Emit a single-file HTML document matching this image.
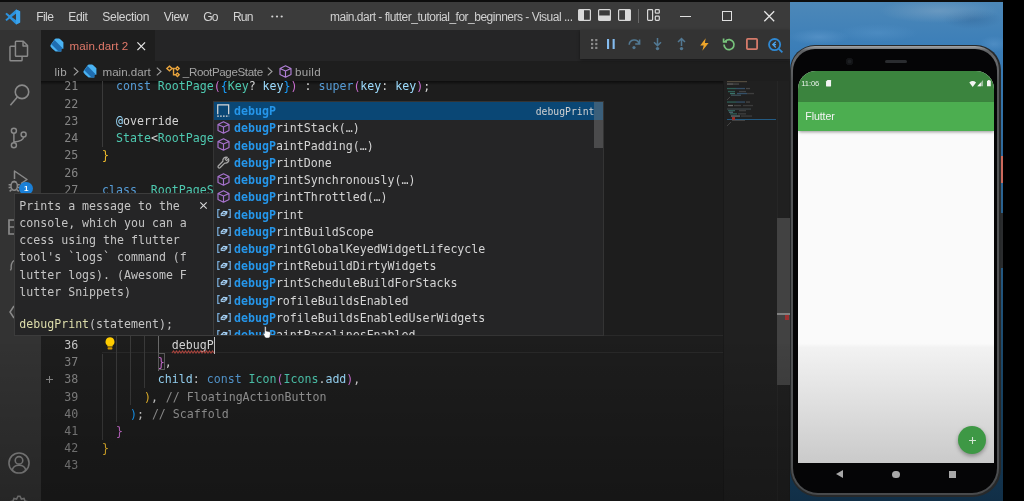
<!DOCTYPE html>
<html>
<head>
<meta charset="utf-8">
<title>main.dart - flutter_tutorial_for_beginners - Visual Studio Code</title>
<style>
*{box-sizing:border-box;margin:0;padding:0}
html,body{width:1024px;height:501px;overflow:hidden;background:#000}
body{position:relative;font-family:"Liberation Sans",sans-serif;color:#ccc}
.abs{position:absolute}
.tx{white-space:pre}
svg{position:absolute;overflow:visible}
#vsc{will-change:transform;left:0;top:2px;width:789.6px;height:499px;background:#1e1e1e;overflow:hidden}
#title{left:0;top:0;width:790px;height:28px;background:#3b3b3b}
#act{left:0;top:28px;width:41px;height:471px;background:#333333}
#tabs{left:41px;top:28px;width:749px;height:31px;background:#252526}
#tab1{left:0;top:0;width:114px;height:31px;background:#1e1e1e}
#bread{left:41px;top:59px;width:749px;height:20px;background:#1e1e1e}
#editor{left:41px;top:79px;width:749px;height:420px;background:#1d1d1d;overflow:hidden}
.mono{font-family:"DejaVu Sans Mono","Liberation Mono",monospace}
.ln{position:absolute;left:0;width:37.3px;text-align:right;font-size:11.6px;color:#858585;height:18px;line-height:18px;white-space:pre}
.cl{position:absolute;left:61px;font-size:11.6px;height:18px;line-height:18px;white-space:pre;color:#d4d4d4}
.k{color:#569cd6}.t{color:#4ec9b0}.v{color:#9cdcfe}.y{color:#f0bc2c}.p{color:#cc6fd2}.b{color:#179fff}.c{color:#9a9a9a;margin-left:1px}
.guide{position:absolute;width:1px;background:#3a3a3a}
#debugbar{left:580px;top:28px;width:210px;height:29px;background:#333333;box-shadow:0 1px 3px rgba(0,0,0,.45)}
#suggest{left:213px;top:99px;width:391px;height:234.6px;background:#252526;border:1px solid #343434;overflow:hidden}
.sr{position:absolute;left:0;width:389px;height:17.2px;font-size:11.6px;white-space:pre;color:#d4d4d4}
.sr .lbl{position:absolute;left:20px;top:0.8px;height:17.2px;line-height:17.2px}
.hl{color:#2596ea;font-weight:bold}
#doc{left:13.5px;top:191px;width:200.5px;height:142.6px;background:#252526;border:1px solid #3c3c3c;overflow:hidden}
#doc .d{position:absolute;left:4.8px;font-size:11.6px;height:18px;line-height:18px;color:#c4c4c4;white-space:pre}
#wall{left:789px;top:1.8px;width:214.2px;height:499px;background:linear-gradient(180deg,#4d88b8 0%,#3b7eb8 9%,#2f6a9c 30%,#235780 55%,#17405f 80%,#112f47 100%)}
#phone{will-change:transform;left:789.5px;top:45px;width:211.1px;height:451.6px;background:#27292a;border-radius:25px 25px 28px 28px}
#ring{left:1.1px;top:.5px;width:207.8px;height:449.5px;border-radius:24px 24px 27px 27px;background:linear-gradient(180deg,#a4a7aa 0,#86898c 2px,#5e6062 5px,#6a6c6e 14px,#545658 34px,#505254 90%,#484a4c 100%)}
#inner{left:3.3px;top:4.2px;width:203.8px;height:443.4px;border-radius:22px 22px 25px 25px;background:#050506}
#screen{left:7.9px;top:26px;width:196.6px;height:392.3px;background:linear-gradient(180deg,#fafafa 0%,#fafafa 69.5%,#f2f2f2 70.5%,#dfdfdf 85%,#cacaca 100%);overflow:hidden;border-radius:18px 18px 0 0}
</style>
</head>
<body>
<div id="wall" class="abs"><div class="abs" style="left:0;top:0;width:214px;height:60px;background:radial-gradient(ellipse 60px 12px at 150px 9px,rgba(135,170,200,.5),rgba(135,170,200,0)),radial-gradient(ellipse 30px 8px at 30px 35px,rgba(110,165,215,.4),rgba(110,165,215,0)),radial-gradient(ellipse 40px 9px at 89px 31px,rgba(100,160,212,.3),rgba(100,160,212,0)),radial-gradient(ellipse 30px 10px at 183px 17px,rgba(45,95,145,.4),rgba(45,95,145,0)),radial-gradient(ellipse 15px 8px at 205px 42px,rgba(110,165,215,.35),rgba(110,165,215,0))"></div><div class="abs" style="left:211.5px;top:154px;width:2.5px;height:27px;background:#cc6a5c"></div><div class="abs" style="left:211.5px;top:211px;width:2.5px;height:55px;background:#2a2c2e"></div></div>
<div class="abs" style="left:0;top:0;width:1003.2px;height:2px;background:#0d0d0d"></div>
<div id="vsc" class="abs">

<div id="title" class="abs">
<svg style="left:4.8px;top:6.8px" width="15.6" height="15.8" viewBox="0 0 100 100"><path d="M71 2 L97 14 V86 L71 98 L30 61 L11 76 L2 69 L22 50 L2 31 L11 24 L30 39 Z M72 28 L43 50 L72 72 Z" fill="#2b92de" fill-rule="evenodd"/><path d="M71 2 L97 14 V86 L71 98 Z M72 28 V72 Z" fill="#3aa2ea"/></svg>
<span class="abs tx" style="left:36.3px;top:6.5px;height:16px;line-height:16px;font-size:12.10px;color:#d4d4d4;letter-spacing:-0.625px;">File</span>
<span class="abs tx" style="left:68.3px;top:6.5px;height:16px;line-height:16px;font-size:12.10px;color:#d4d4d4;letter-spacing:-0.463px;">Edit</span>
<span class="abs tx" style="left:102.3px;top:6.5px;height:16px;line-height:16px;font-size:12.10px;color:#d4d4d4;letter-spacing:-0.331px;">Selection</span>
<span class="abs tx" style="left:163.8px;top:6.5px;height:16px;line-height:16px;font-size:12.10px;color:#d4d4d4;letter-spacing:-0.427px;">View</span>
<span class="abs tx" style="left:203.3px;top:6.5px;height:16px;line-height:16px;font-size:12.10px;color:#d4d4d4;letter-spacing:-0.871px;">Go</span>
<span class="abs tx" style="left:232.9px;top:6.5px;height:16px;line-height:16px;font-size:12.10px;color:#d4d4d4;letter-spacing:-0.833px;">Run</span>
<svg style="left:271px;top:13px" width="12" height="3" viewBox="0 0 12 3"><circle cx="1.3" cy="1.5" r="1.1" fill="#d4d4d4"/><circle cx="6" cy="1.5" r="1.1" fill="#d4d4d4"/><circle cx="10.7" cy="1.5" r="1.1" fill="#d4d4d4"/></svg>
<span class="abs tx" style="left:330.0px;top:6.8px;height:16px;line-height:16px;font-size:12.00px;color:#d0d0d0;letter-spacing:-0.499px;">main.dart - flutter_tutorial_for_beginners - Visual ...</span>
<svg style="left:578px;top:6.9px" width="13" height="12" viewBox="0 0 13 12"><rect x=".6" y=".6" width="11.8" height="10.8" rx="1" fill="none" stroke="#d8d8d8" stroke-width="1.2"/><rect x=".6" y=".6" width="5.4" height="10.8" fill="#d8d8d8"/></svg>
<svg style="left:598px;top:6.9px" width="13" height="12" viewBox="0 0 13 12"><rect x=".6" y=".6" width="11.8" height="10.8" rx="1" fill="none" stroke="#d8d8d8" stroke-width="1.2"/><rect x=".6" y="6.5" width="11.8" height="4.9" fill="#d8d8d8"/></svg>
<svg style="left:618px;top:6.9px" width="13" height="12" viewBox="0 0 13 12"><rect x=".6" y=".6" width="11.8" height="10.8" rx="1" fill="none" stroke="#d8d8d8" stroke-width="1.2"/><rect x="7" y=".6" width="5.4" height="10.8" fill="#d8d8d8"/></svg>
<div class="abs" style="left:638px;top:7px;width:1px;height:14px;background:#6a6a6a"></div>
<svg style="left:647px;top:6.9px" width="13" height="12" viewBox="0 0 13 12" fill="none" stroke="#d8d8d8" stroke-width="1.2"><rect x=".6" y=".6" width="5" height="10.8" rx=".8"/><rect x="8.3" y=".6" width="4" height="3.6" rx=".8"/><rect x="8.3" y="7.2" width="4" height="4.2" rx=".8"/></svg>
<div class="abs" style="left:680px;top:13.5px;width:11px;height:1.2px;background:#e0e0e0"></div>
<div class="abs" style="left:722px;top:9px;width:10px;height:9.5px;border:1.2px solid #e0e0e0"></div>
<svg style="left:763.5px;top:8.5px" width="10.5" height="10.5" viewBox="0 0 10 10"><path d="M.3 .3 L9.7 9.7 M9.7 .3 L.3 9.7" stroke="#e6e6e6" stroke-width="1.2" fill="none"/></svg>
</div>
<div id="act" class="abs">
<svg style="left:8.7px;top:9.7px" width="19.5" height="22" viewBox="0 0 20 22" fill="none" stroke="#8a8a8a" stroke-width="1.5" stroke-linejoin="round"><path d="M7.4 1 H14.6 L19 5.4 V15.6 Q19 16.4 18.2 16.4 H7.4 Q6.6 16.4 6.6 15.6 V1.8 Q6.6 1 7.4 1 Z"/><path d="M14.4 1.2 V5.8 H18.8"/><path d="M6.4 6.2 H1.8 Q1 6.2 1 7 V20.2 Q1 21 1.8 21 H12.6 Q13.4 21 13.4 20.2 V16.6"/></svg>
<svg style="left:9.5px;top:53.5px" width="19.5" height="22" viewBox="0 0 20 22" fill="none" stroke="#8a8a8a" stroke-width="1.6"><circle cx="12.3" cy="7.8" r="6.9"/><path d="M7.6 13 L.4 21.4"/></svg>
<svg style="left:10px;top:96.5px" width="17.5" height="22" viewBox="0 0 18 22" fill="none" stroke="#8a8a8a" stroke-width="1.5"><circle cx="4" cy="3.6" r="2.6"/><circle cx="4" cy="18.4" r="2.6"/><circle cx="14" cy="7.4" r="2.6"/><path d="M4 6.2 V15.8 M14 10 Q14 14 4 15.2"/></svg>
<svg style="left:8.2px;top:140px" width="20" height="22" viewBox="0 0 20 22" fill="none" stroke="#8a8a8a" stroke-width="1.5" stroke-linejoin="round"><path d="M6.5 9 V1 L19 9.5 L13 13.6"/><ellipse cx="6.2" cy="16" rx="3.2" ry="4.2"/><path d="M3.8 12.6 Q6.2 9.8 8.6 12.6 M3 14.8 H.6 M3 17.6 H.6 M9.4 14.8 H11.8 M9.4 17.6 H11.8 M3.6 19.6 L1.6 21.4 M8.8 19.6 L10.8 21.4"/></svg>
<div class="abs" style="left:19.3px;top:152.1px;width:13.4px;height:13.4px;border-radius:7px;background:#1a80d8"></div>
<span class="abs tx" style="left:24.0px;top:151.0px;height:16px;line-height:16px;font-size:8.00px;color:#fff;font-weight:bold;">1</span>
<svg style="left:8px;top:185px" width="20" height="20" viewBox="0 0 20 20" fill="none" stroke="#8a8a8a" stroke-width="1.7"><path d="M1 5 H10 V19 H1 Z M1 12 H10 M10 12 H17 V19 H10"/><rect x="12" y="1" width="7" height="7"/></svg>
<svg style="left:8px;top:228px" width="20" height="20" viewBox="0 0 20 20" fill="none" stroke="#8a8a8a" stroke-width="1.4"><path d="M6 2.5 Q2.6 5 3.2 11 M3.2 11 L2.4 12.4 M8 2 H16 M6 18 H18"/></svg>
<svg style="left:8px;top:272px" width="20" height="20" viewBox="0 0 20 20" fill="none" stroke="#8a8a8a" stroke-width="1.5"><path d="M6 4 L2 10 L6 16 M14 4 L18 10 L14 16"/></svg>
<svg style="left:7.8px;top:421.8px" width="22" height="22" viewBox="0 0 21 21" fill="none" stroke="#8a8a8a" stroke-width="1.5"><circle cx="10.5" cy="10.5" r="9.6"/><circle cx="10.5" cy="8" r="3.6"/><path d="M4 17.4 Q5 12.6 10.5 12.6 Q16 12.6 17 17.4"/></svg>
<svg style="left:8.5px;top:464.6px" width="20" height="20" viewBox="0 0 20 20" fill="none" stroke="#8a8a8a" stroke-width="1.6"><path d="M1 10 L1.6 6.6 L4 6 L5 3.4 L7.6 4 L9 1.2 H11 L12.4 4 L15 3.4 L16 6 L18.4 6.6 L19 10"/></svg>
</div>
<div id="tabs" class="abs"><div id="tab1" class="abs">
<svg style="left:9.3px;top:8.3px" width="14" height="14" viewBox="0 0 24 24"><path d="M3.6 17.8 L1.2 15.2 Q.2 13.8 1 12.2 L7.6 2.4 Q8.6 1 10.4 1 H15.2 Q16.6 1 17.6 2 L23 7.4 V18.6 H19.4 V23 H9.6 Z" fill="#4ab3f3"/><path d="M2.2 10.6 L7.8 3.6 L22.6 18.6 H19.4 V23 H14.6 Z" fill="#1f6db0"/></svg>
<span class="abs tx" style="left:28.5px;top:8.0px;height:16px;line-height:16px;font-size:11.60px;color:#e0796a;letter-spacing:0.070px;">main.dart 2</span>
<svg style="left:96px;top:11.5px" width="8.5" height="8.5" viewBox="0 0 8 8"><path d="M.4 .4 L7.6 7.6 M7.6 .4 L.4 7.6" stroke="#e8e8e8" stroke-width="1.15" fill="none"/></svg>
</div></div>
<div id="bread" class="abs">
<span class="abs tx" style="left:13.5px;top:2.5px;height:16px;line-height:16px;font-size:11.60px;color:#a4a4a4;letter-spacing:0.298px;">lib</span>
<svg style="left:31.5px;top:6px" width="6" height="9" viewBox="0 0 6 9"><path d="M.8 .6 L5 4.5 L.8 8.4" stroke="#a0a0a0" stroke-width="1.1" fill="none"/></svg>
<svg style="left:41.8px;top:3.3px" width="14" height="14" viewBox="0 0 24 24"><path d="M3.6 17.8 L1.2 15.2 Q.2 13.8 1 12.2 L7.6 2.4 Q8.6 1 10.4 1 H15.2 Q16.6 1 17.6 2 L23 7.4 V18.6 H19.4 V23 H9.6 Z" fill="#4ab3f3"/><path d="M2.2 10.6 L7.8 3.6 L22.6 18.6 H19.4 V23 H14.6 Z" fill="#1f6db0"/></svg>
<span class="abs tx" style="left:61.5px;top:2.5px;height:16px;line-height:16px;font-size:11.60px;color:#a4a4a4;letter-spacing:-0.006px;">main.dart</span>
<svg style="left:114.5px;top:6px" width="6" height="9" viewBox="0 0 6 9"><path d="M.8 .6 L5 4.5 L.8 8.4" stroke="#a0a0a0" stroke-width="1.1" fill="none"/></svg>
<svg style="left:125px;top:3.8px" width="14" height="13" viewBox="0 0 13 12" fill="none" stroke="#e8a33c" stroke-width="1.3"><path d="M3.2 1 L5.6 3.2 L3.2 5.4 L.8 3.2 Z M5.6 3.2 H8.2 M7 3.2 V9 H9 M10.6 1.6 L12.2 3.2 L10.6 4.8 L9 3.2 Z M10.6 7.4 L12.2 9 L10.6 10.6 L9 9 Z"/></svg>
<span class="abs tx" style="left:141.8px;top:2.5px;height:16px;line-height:16px;font-size:11.60px;color:#a4a4a4;letter-spacing:-0.367px;">_RootPageState</span>
<svg style="left:226.4px;top:6px" width="6" height="9" viewBox="0 0 6 9"><path d="M.8 .6 L5 4.5 L.8 8.4" stroke="#a0a0a0" stroke-width="1.1" fill="none"/></svg>
<svg style="left:238px;top:3.8px" width="13" height="13" viewBox="0 0 13 13" fill="none" stroke="#b180d7" stroke-width="1.15" stroke-linejoin="round"><path d="M6.5 .8 L12 3.4 V9.6 L6.5 12.2 L1 9.6 V3.4 Z M1 3.4 L6.5 6 L12 3.4 M6.5 6 V12.2"/></svg>
<span class="abs tx" style="left:254.0px;top:2.5px;height:16px;line-height:16px;font-size:11.60px;color:#a4a4a4;letter-spacing:0.298px;">build</span>
</div>
<div id="editor" class="abs mono">
<div class="abs" style="left:0;top:0;width:748px;height:4px;background:linear-gradient(180deg,rgba(0,0,0,.55),rgba(0,0,0,0))"></div>
<div class="abs" style="left:682px;top:0;width:66px;height:420px;background:#202020;border-left:1px solid #191919"></div>
<div class="abs" style="left:61px;top:254.0px;width:621px;height:17.7px;border-top:1px solid #292929;border-bottom:1px solid #292929"></div>
<div class="guide" style="left:61.0px;top:-3.2px;height:68.9px;background:#3a3a3a"></div>
<div class="guide" style="left:61.0px;top:117.4px;height:137.8px;background:#3a3a3a"></div>
<div class="guide" style="left:61.0px;top:272.5px;height:86.1px;background:#3a3a3a"></div>
<div class="guide" style="left:75.0px;top:151.9px;height:189.5px;background:#3a3a3a"></div>
<div class="guide" style="left:89.0px;top:169.1px;height:155.1px;background:#3a3a3a"></div>
<div class="guide" style="left:103.0px;top:186.3px;height:120.6px;background:#3a3a3a"></div>
<div class="guide" style="left:117.0px;top:203.5px;height:86.2px;background:#6a6a6a"></div>
<div class="ln" style="top:-3.60px">21</div>
<div class="cl" style="top:-3.60px">  <span class="k">const</span> <span class="t">RootPage</span><span class="p">(</span><span class="b">{</span><span class="t">Key</span>? <span class="v">key</span><span class="b">}</span><span class="p">)</span> : <span class="k">super</span><span class="p">(</span><span class="v">key</span>: <span class="v">key</span><span class="p">)</span>;</div>
<div class="ln" style="top:13.63px">22</div>
<div class="ln" style="top:30.86px">23</div>
<div class="cl" style="top:30.86px">  <span class="v">@</span>override</div>
<div class="ln" style="top:48.09px">24</div>
<div class="cl" style="top:48.09px">  <span class="t">State</span>&lt;<span class="t">RootPage</span>&gt; <span class="v">createState</span><span class="p">()</span> =&gt; <span class="t">_RootPageState</span><span class="p">()</span>;</div>
<div class="ln" style="top:65.32px">25</div>
<div class="cl" style="top:65.32px"><span class="y">}</span></div>
<div class="ln" style="top:82.55px">26</div>
<div class="ln" style="top:99.78px">27</div>
<div class="cl" style="top:99.78px"><span class="k">class</span> <span class="t">_RootPageState</span> <span class="k">extends</span> <span class="t">State</span>&lt;<span class="t">RootPage</span>&gt; <span class="y">{</span></div>
<div class="ln" style="top:117.01px">28</div>
<div class="ln" style="top:134.24px">29</div>
<div class="ln" style="top:151.47px">30</div>
<div class="ln" style="top:168.70px">31</div>
<div class="ln" style="top:185.93px">32</div>
<div class="ln" style="top:203.16px">33</div>
<div class="ln" style="top:220.39px">34</div>
<div class="ln" style="top:237.62px">35</div>
<div class="ln" style="top:254.85px;color:#c6c6c6">36</div>
<div class="cl" style="top:254.85px">          debugP</div>
<div class="ln" style="top:272.08px">37</div>
<div class="cl" style="top:272.08px">        <span class="p">}</span>,</div>
<div class="ln" style="top:289.31px">38</div>
<div class="cl" style="top:289.31px">        <span class="v">child</span>: <span class="k">const</span> <span class="t">Icon</span><span class="p">(</span><span class="t">Icons</span>.<span class="v">add</span><span class="p">)</span>,</div>
<div class="ln" style="top:306.54px">39</div>
<div class="cl" style="top:306.54px">      <span class="y">)</span>, <span class="c">// FloatingActionButton</span></div>
<div class="ln" style="top:323.77px">40</div>
<div class="cl" style="top:323.77px">    <span class="b">)</span>; <span class="c">// Scaffold</span></div>
<div class="ln" style="top:341.00px">41</div>
<div class="cl" style="top:341.00px">  <span class="p">}</span></div>
<div class="ln" style="top:358.23px">42</div>
<div class="cl" style="top:358.23px"><span class="y">}</span></div>
<div class="ln" style="top:375.46px">43</div>
<div class="abs" style="left:116.7px;top:272.2px;width:7.6px;height:16.6px;border:1px solid #5c5c5c"></div>
<svg style="left:131.0px;top:268.9px" width="42" height="4" viewBox="0 0 42 4"><path d="M0 3 L1.5 1 L3 3 L4.5 1 L6 3 L7.5 1 L9 3 L10.5 1 L12 3 L13.5 1 L15 3 L16.5 1 L18 3 L19.5 1 L21 3 L22.5 1 L24 3 L25.5 1 L27 3 L28.5 1 L30 3 L31.5 1 L33 3 L34.5 1 L36 3 L37.5 1 L39 3 L40.5 1 L42 3" stroke="#ac463f" stroke-width="1.1" fill="none"/></svg>
<div class="abs" style="left:172.6px;top:256.4px;width:1.4px;height:16.5px;background:#c0c0c0"></div>
<svg style="left:64.0px;top:255.6px" width="10" height="13" viewBox="0 0 10 13"><path d="M5 .3 A4.6 4.6 0 0 1 7.6 8.6 V9.6 H2.4 V8.6 A4.6 4.6 0 0 1 5 .3 Z" fill="#ffcc00"/><rect x="2.6" y="10.2" width="4.8" height="2.4" rx=".8" fill="#d89b00"/></svg>
<svg style="left:4.5px;top:294.8px" width="7" height="7" viewBox="0 0 7 7"><path d="M3.5 0 V7 M0 3.5 H7" stroke="#8a8a8a" stroke-width="1" fill="none"/></svg>
<svg style="left:686px;top:0;opacity:.6;filter:blur(.35px)" width="60" height="50" viewBox="0 0 60 50">
<rect x="0.0" y="-0.1" width="20.0" height="1.3" fill="#8a7a60" opacity=".8"/>
<rect x="0.0" y="2.4" width="6.0" height="1.3" fill="#a8a8a8" opacity=".8"/>
<rect x="6.0" y="2.4" width="6.0" height="1.3" fill="#707070" opacity=".8"/>
<rect x="0.0" y="6.9" width="9.0" height="1.3" fill="#3f9f90" opacity=".8"/>
<rect x="9.0" y="6.9" width="9.0" height="1.3" fill="#4a80b0" opacity=".8"/>
<rect x="19.0" y="6.9" width="4.0" height="1.3" fill="#707070" opacity=".8"/>
<rect x="1.0" y="9.9" width="7.0" height="1.3" fill="#3f9f90" opacity=".8"/>
<rect x="12.0" y="9.9" width="7.0" height="1.3" fill="#666" opacity=".8"/>
<rect x="3.0" y="11.9" width="5.0" height="1.3" fill="#58d0b8" opacity=".8"/>
<rect x="10.0" y="11.9" width="10.0" height="1.3" fill="#4a86b8" opacity=".8"/>
<rect x="20.0" y="11.9" width="7.0" height="1.3" fill="#606060" opacity=".8"/>
<rect x="4.0" y="13.6" width="10.0" height="1.3" fill="#5a7f90" opacity=".8"/>
<rect x="0.0" y="20.4" width="9.0" height="1.3" fill="#3f9f90" opacity=".8"/>
<rect x="9.0" y="20.4" width="9.0" height="1.3" fill="#4a80b0" opacity=".8"/>
<rect x="19.0" y="20.4" width="4.0" height="1.3" fill="#707070" opacity=".8"/>
<rect x="1.0" y="23.9" width="5.0" height="1.3" fill="#b8b8b8" opacity=".8"/>
<rect x="7.0" y="23.9" width="7.0" height="1.3" fill="#666" opacity=".8"/>
<rect x="16.0" y="23.9" width="10.0" height="1.3" fill="#5a5a5a" opacity=".8"/>
<rect x="0.0" y="27.4" width="24.0" height="1.3" fill="#5a6a70" opacity=".8"/>
<rect x="1.0" y="29.0" width="7.0" height="1.3" fill="#3f9f90" opacity=".8"/>
<rect x="12.0" y="29.0" width="7.0" height="1.3" fill="#606060" opacity=".8"/>
<rect x="2.0" y="30.6" width="4.0" height="1.3" fill="#7ab0c8" opacity=".8"/>
<rect x="3.0" y="32.2" width="7.0" height="1.3" fill="#3f9f90" opacity=".8"/>
<rect x="11.0" y="32.2" width="8.0" height="1.3" fill="#5f5f5f" opacity=".8"/>
<rect x="4.0" y="34.4" width="9.0" height="1.3" fill="#a8c0c8" opacity=".8"/>
<rect x="14.0" y="34.4" width="11.0" height="1.3" fill="#5a5a5a" opacity=".8"/>
<rect x="5.0" y="38.7" width="13.0" height="1.3" fill="#686868" opacity=".8"/>
<path d="M3 16 L0 19 M4 41 L0 45" stroke="#6a6a6a" stroke-width=".8" fill="none"/>
</svg>
<div class="abs" style="left:686px;top:37.5px;width:49px;height:1.1px;background:#235a82"></div>
<div class="abs" style="left:691px;top:36.3px;width:3.2px;height:2.4px;background:#9a302a"></div>
<div class="abs" style="left:735.5px;top:0;width:1px;height:420px;background:#262626"></div>
<div class="abs" style="left:736px;top:137.0px;width:13px;height:167.0px;background:#424242"></div>
<div class="abs" style="left:736px;top:232.0px;width:13px;height:1.5px;background:#808080"></div>
<div class="abs" style="left:744px;top:233.5px;width:3.6px;height:5.5px;background:#9c3030"></div>
</div>
<div id="debugbar" class="abs">
<svg style="left:10.6px;top:8.8px" width="6.4" height="10.0" viewBox="0 0 6.4 10" fill="#8c8c8c"><rect x="0" y="0" width="2.2" height="2.2"/><rect x="4.2" y="0" width="2.2" height="2.2"/><rect x="0" y="3.9" width="2.2" height="2.2"/><rect x="4.2" y="3.9" width="2.2" height="2.2"/><rect x="0" y="7.8" width="2.2" height="2.2"/><rect x="4.2" y="7.8" width="2.2" height="2.2"/></svg>
<svg style="left:27.0px;top:8.8px" width="8.0" height="10.0" viewBox="0 0 8 10" fill="#84bcf0"><rect x="0" y="0" width="2.1" height="10"/><rect x="5.6" y="0" width="2.1" height="10"/></svg>
<svg style="left:48.0px;top:8.3px" width="13.0" height="11.0" viewBox="0 0 13 11" fill="none" stroke="#527892" stroke-width="1.55"><path d="M1.2 6.8 A5 5 0 0 1 11 5.6 M11.6 1.4 V6 H7.2"/><circle cx="6" cy="9.6" r="1.6" fill="#527892" stroke="none"/></svg>
<svg style="left:73.0px;top:7.8px" width="9.0" height="12.0" viewBox="0 0 9 12" fill="none" stroke="#527892" stroke-width="1.5"><path d="M4.5 0 V7.4 M1 4.2 L4.5 7.6 L8 4.2"/><circle cx="4.5" cy="10.6" r="1.7" fill="#527892" stroke="none"/></svg>
<svg style="left:96.5px;top:7.8px" width="9.0" height="12.0" viewBox="0 0 9 12" fill="none" stroke="#527892" stroke-width="1.5"><path d="M4.5 8 V.8 M1 4 L4.5 .6 L8 4"/><circle cx="4.5" cy="10.6" r="1.7" fill="#527892" stroke="none"/></svg>
<svg style="left:119.8px;top:8.0px" width="8.8" height="13.0" viewBox="0 0 9 13"><path d="M5.8 0 L.2 7.6 H3.8 L2.4 13 L8.8 5 H5 Z" fill="#eea52a"/></svg>
<svg style="left:143.0px;top:7.8px" width="12.0" height="12.0" viewBox="0 0 12 12" fill="none" stroke="#78c47c" stroke-width="1.7"><path d="M2.4 3.2 A5 5 0 1 1 1 6.6 M.6 .6 V3.8 H4"/></svg>
<svg style="left:166.0px;top:7.8px" width="12.0" height="12.0" viewBox="0 0 12 12" fill="none" stroke="#d47a6a" stroke-width="1.8"><rect x=".9" y=".9" width="10.2" height="10.2" rx=".8"/></svg>
<svg style="left:187.6px;top:8.2px" width="15.0" height="15.0" viewBox="0 0 15 15" fill="none" stroke="#2f88d2" stroke-width="1.8"><circle cx="6.6" cy="6.6" r="5.6"/><path d="M10.8 10.8 L14.4 14.4"/><path d="M7.8 3.8 L4.8 6.6 L7.8 9.4 M8 6.6 H5.4" stroke="#4aa4ee" stroke-width="1.3"/></svg>
</div>
<div id="suggest" class="abs mono">
<div class="sr" style="top:0.40px;background:#0a4775;width:389px;height:17.6px"><svg style="left:3.4px;top:1.6px" width="12.4" height="13" viewBox="0 0 12 12.5" fill="none" stroke="#d8d8d8" stroke-width="1.2"><path d="M.7 10 V.7 H11.3 V10"/><path d="M.2 11.8 H11.8" stroke-dasharray="1.6 1.2"/></svg><span class="lbl"><span class="hl">debugP</span></span><span class="abs" style="right:8.6px;top:0.6px;height:17.2px;line-height:17.2px;font-size:9.75px;color:#d0d0d0">debugPrint</span></div>
<div class="sr" style="top:17.63px"><svg style="left:2.8px;top:1.5px" width="13" height="13" viewBox="0 0 13 13" fill="none" stroke="#a873cf" stroke-width="1.15" stroke-linejoin="round"><path d="M6.5 .8 L12 3.4 V9.6 L6.5 12.2 L1 9.6 V3.4 Z M1 3.4 L6.5 6 L12 3.4 M6.5 6 V12.2"/></svg><span class="lbl"><span class="hl">debugP</span>rintStack(…)</span></div>
<div class="sr" style="top:34.86px"><svg style="left:2.8px;top:1.5px" width="13" height="13" viewBox="0 0 13 13" fill="none" stroke="#a873cf" stroke-width="1.15" stroke-linejoin="round"><path d="M6.5 .8 L12 3.4 V9.6 L6.5 12.2 L1 9.6 V3.4 Z M1 3.4 L6.5 6 L12 3.4 M6.5 6 V12.2"/></svg><span class="lbl"><span class="hl">debugP</span>aintPadding(…)</span></div>
<div class="sr" style="top:52.09px"><svg style="left:2.8px;top:1.7px" width="13" height="13" viewBox="0 0 13 13" fill="none" stroke="#a8a8a8" stroke-width="1.25" stroke-linejoin="round"><path d="M11.6 2.6 L9.6 4.6 L8.3 3.3 L10.3 1.3 A3.4 3.4 0 0 0 5.9 5.3 L1.2 10 A1.3 1.3 0 0 0 3 11.8 L7.7 7.1 A3.4 3.4 0 0 0 11.6 2.6 Z"/></svg><span class="lbl"><span class="hl">debugP</span>rintDone</span></div>
<div class="sr" style="top:69.32px"><svg style="left:2.8px;top:1.5px" width="13" height="13" viewBox="0 0 13 13" fill="none" stroke="#a873cf" stroke-width="1.15" stroke-linejoin="round"><path d="M6.5 .8 L12 3.4 V9.6 L6.5 12.2 L1 9.6 V3.4 Z M1 3.4 L6.5 6 L12 3.4 M6.5 6 V12.2"/></svg><span class="lbl"><span class="hl">debugP</span>rintSynchronously(…)</span></div>
<div class="sr" style="top:86.55px"><svg style="left:2.8px;top:1.5px" width="13" height="13" viewBox="0 0 13 13" fill="none" stroke="#a873cf" stroke-width="1.15" stroke-linejoin="round"><path d="M6.5 .8 L12 3.4 V9.6 L6.5 12.2 L1 9.6 V3.4 Z M1 3.4 L6.5 6 L12 3.4 M6.5 6 V12.2"/></svg><span class="lbl"><span class="hl">debugP</span>rintThrottled(…)</span></div>
<div class="sr" style="top:103.78px"><svg style="left:2.6px;top:3.5px" width="14" height="9" viewBox="0 0 14 9" fill="none" stroke="#7aaedb" stroke-width="1.2"><path d="M2.7 .6 H.8 V8.4 H2.7 M11.3 .6 H13.2 V8.4 H11.3"/><path d="M4.2 4.6 L6.6 2.4 L10 2.8 L9.6 4.8 L7.2 6.8 L4.2 6.2 Z M4.4 4.6 L7.4 5 L9.8 3" stroke="#a6d2f7" stroke-width="1.05"/></svg><span class="lbl"><span class="hl">debugP</span>rint</span></div>
<div class="sr" style="top:121.01px"><svg style="left:2.6px;top:3.5px" width="14" height="9" viewBox="0 0 14 9" fill="none" stroke="#7aaedb" stroke-width="1.2"><path d="M2.7 .6 H.8 V8.4 H2.7 M11.3 .6 H13.2 V8.4 H11.3"/><path d="M4.2 4.6 L6.6 2.4 L10 2.8 L9.6 4.8 L7.2 6.8 L4.2 6.2 Z M4.4 4.6 L7.4 5 L9.8 3" stroke="#a6d2f7" stroke-width="1.05"/></svg><span class="lbl"><span class="hl">debugP</span>rintBuildScope</span></div>
<div class="sr" style="top:138.24px"><svg style="left:2.6px;top:3.5px" width="14" height="9" viewBox="0 0 14 9" fill="none" stroke="#7aaedb" stroke-width="1.2"><path d="M2.7 .6 H.8 V8.4 H2.7 M11.3 .6 H13.2 V8.4 H11.3"/><path d="M4.2 4.6 L6.6 2.4 L10 2.8 L9.6 4.8 L7.2 6.8 L4.2 6.2 Z M4.4 4.6 L7.4 5 L9.8 3" stroke="#a6d2f7" stroke-width="1.05"/></svg><span class="lbl"><span class="hl">debugP</span>rintGlobalKeyedWidgetLifecycle</span></div>
<div class="sr" style="top:155.47px"><svg style="left:2.6px;top:3.5px" width="14" height="9" viewBox="0 0 14 9" fill="none" stroke="#7aaedb" stroke-width="1.2"><path d="M2.7 .6 H.8 V8.4 H2.7 M11.3 .6 H13.2 V8.4 H11.3"/><path d="M4.2 4.6 L6.6 2.4 L10 2.8 L9.6 4.8 L7.2 6.8 L4.2 6.2 Z M4.4 4.6 L7.4 5 L9.8 3" stroke="#a6d2f7" stroke-width="1.05"/></svg><span class="lbl"><span class="hl">debugP</span>rintRebuildDirtyWidgets</span></div>
<div class="sr" style="top:172.70px"><svg style="left:2.6px;top:3.5px" width="14" height="9" viewBox="0 0 14 9" fill="none" stroke="#7aaedb" stroke-width="1.2"><path d="M2.7 .6 H.8 V8.4 H2.7 M11.3 .6 H13.2 V8.4 H11.3"/><path d="M4.2 4.6 L6.6 2.4 L10 2.8 L9.6 4.8 L7.2 6.8 L4.2 6.2 Z M4.4 4.6 L7.4 5 L9.8 3" stroke="#a6d2f7" stroke-width="1.05"/></svg><span class="lbl"><span class="hl">debugP</span>rintScheduleBuildForStacks</span></div>
<div class="sr" style="top:189.93px"><svg style="left:2.6px;top:3.5px" width="14" height="9" viewBox="0 0 14 9" fill="none" stroke="#7aaedb" stroke-width="1.2"><path d="M2.7 .6 H.8 V8.4 H2.7 M11.3 .6 H13.2 V8.4 H11.3"/><path d="M4.2 4.6 L6.6 2.4 L10 2.8 L9.6 4.8 L7.2 6.8 L4.2 6.2 Z M4.4 4.6 L7.4 5 L9.8 3" stroke="#a6d2f7" stroke-width="1.05"/></svg><span class="lbl"><span class="hl">debugP</span>rofileBuildsEnabled</span></div>
<div class="sr" style="top:207.16px"><svg style="left:2.6px;top:3.5px" width="14" height="9" viewBox="0 0 14 9" fill="none" stroke="#7aaedb" stroke-width="1.2"><path d="M2.7 .6 H.8 V8.4 H2.7 M11.3 .6 H13.2 V8.4 H11.3"/><path d="M4.2 4.6 L6.6 2.4 L10 2.8 L9.6 4.8 L7.2 6.8 L4.2 6.2 Z M4.4 4.6 L7.4 5 L9.8 3" stroke="#a6d2f7" stroke-width="1.05"/></svg><span class="lbl"><span class="hl">debugP</span>rofileBuildsEnabledUserWidgets</span></div>
<div class="sr" style="top:224.39px"><svg style="left:2.6px;top:3.5px" width="14" height="9" viewBox="0 0 14 9" fill="none" stroke="#7aaedb" stroke-width="1.2"><path d="M2.7 .6 H.8 V8.4 H2.7 M11.3 .6 H13.2 V8.4 H11.3"/><path d="M4.2 4.6 L6.6 2.4 L10 2.8 L9.6 4.8 L7.2 6.8 L4.2 6.2 Z M4.4 4.6 L7.4 5 L9.8 3" stroke="#a6d2f7" stroke-width="1.05"/></svg><span class="lbl"><span class="hl">debugP</span>aintBaselinesEnabled</span></div>
<div class="abs" style="left:380px;top:0.2px;width:9.4px;height:45.8px;background:rgba(128,128,128,.42)"></div>
</div>
<svg style="left:262.8px;top:324.4px" width="8" height="12.5" viewBox="0 0 8 12.5"><path d="M1.9 .5 Q2.9 .2 3.1 1.2 V5 L6.6 5.8 Q7.6 6.2 7.5 7.4 L7 10.6 Q6.8 12 5.4 12 H3.4 Q2.4 12 1.8 11 L.4 8.2 Q.2 7.2 1.2 7.2 L1.6 7.6 V1.2 Q1.6 .6 1.9 .5 Z" fill="#fafafa" stroke="#2a2a2a" stroke-width=".5"/></svg>
<div id="doc" class="abs mono">
<div class="d" style="top:2.70px">Prints a message to the</div>
<div class="d" style="top:19.90px">console, which you can a</div>
<div class="d" style="top:37.10px">ccess using the flutter</div>
<div class="d" style="top:54.30px">tool&#x27;s `logs` command (f</div>
<div class="d" style="top:71.50px">lutter logs). (Awesome F</div>
<div class="d" style="top:88.70px">lutter Snippets)</div>
<div class="d" style="top:105.90px"></div>
<div class="d" style="top:120.80px"><span style="color:#dcdcaa">debugPrint</span>(statement);</div>
<svg style="left:185px;top:7.6px" width="7" height="7" viewBox="0 0 7 7"><path d="M.3 .3 L6.7 6.7 M6.7 .3 L.3 6.7" stroke="#d8d8d8" stroke-width="1.1" fill="none"/></svg>
</div>
<div class="abs" style="left:0;top:342px;width:790px;height:157px;background:linear-gradient(180deg,rgba(0,0,0,.02),rgba(0,0,0,.25));pointer-events:none"></div>
</div>
<div id="phone" class="abs"><div id="ring" class="abs"></div><div id="inner" class="abs"></div>
<div class="abs" style="left:95.1px;top:15.4px;width:21.6px;height:3px;border-radius:2px;background:#2a2c2f"></div>
<div class="abs" style="left:55.7px;top:13.4px;width:7px;height:7px;border-radius:4px;background:#1d1f22;box-shadow:inset 0 0 0 1.5px #131416"></div>
<div id="screen" class="abs">
<div class="abs" style="left:0;top:0;width:197px;height:31px;background:#3b843e"></div>
<div class="abs" style="left:0;top:31px;width:197px;height:28.5px;background:#4cae50;box-shadow:0 2px 3px -1px rgba(0,0,0,.4)"></div>
<span class="abs tx" style="left:3.4px;top:5.0px;height:16px;line-height:16px;font-size:7.60px;color:#eaf2ea;letter-spacing:-0.131px;">11:06</span>
<svg style="left:28.2px;top:9.2px" width="5.1" height="6.4" viewBox="0 0 5.5 7"><path d="M1.6 0 H5 Q5.5 0 5.5 .5 V6.5 Q5.5 7 5 7 H.5 Q0 7 0 6.5 V1.6 Z" fill="#f4f4f4"/></svg>
<svg style="left:170.7px;top:9.7px" width="7.4" height="5.9" viewBox="0 0 8 7"><path d="M0 1.8 Q4 -1.6 8 1.8 L4 7 Z" fill="#f4f4f4"/></svg>
<svg style="left:179.3px;top:9.4px" width="6.4" height="6.2" viewBox="0 0 6.5 7"><path d="M6.5 0 V7 H0 Z" fill="#f4f4f4" opacity=".55"/><path d="M4 2.7 V7 H0 Z" fill="#f4f4f4"/></svg>
<svg style="left:188.7px;top:9.2px" width="3.8" height="6.4" viewBox="0 0 4.5 7.5"><path d="M1.3 0 H3.2 V.8 H4.5 V7.5 H0 V.8 H1.3 Z" fill="#f4f4f4"/></svg>
<span class="abs tx" style="left:7.4px;top:37.3px;height:16px;line-height:16px;font-size:10.60px;color:#f4f4f4;letter-spacing:-0.092px;">Flutter</span>
<div class="abs" style="left:160.6px;top:355.4px;width:28px;height:28px;border-radius:14px;background:#3e9845;box-shadow:0 2px 4px rgba(0,0,0,.35)"></div>
<svg style="left:171.1px;top:365.9px" width="7" height="7" viewBox="0 0 7 7"><path d="M3.5 0 V7 M0 3.5 H7" stroke="#d4e6d4" stroke-width="1.1" fill="none"/></svg>
</div>
<svg style="left:46px;top:425.4px" width="7" height="8" viewBox="0 0 7 8"><path d="M7 0 V8 L0 4 Z" fill="#a8a8a8"/></svg>
<div class="abs" style="left:102.4px;top:425.7px;width:7.4px;height:7.4px;border-radius:4px;background:#a8a8a8"></div>
<div class="abs" style="left:159px;top:425.9px;width:7px;height:7px;background:#a8a8a8"></div>
</div>
</body>
</html>
